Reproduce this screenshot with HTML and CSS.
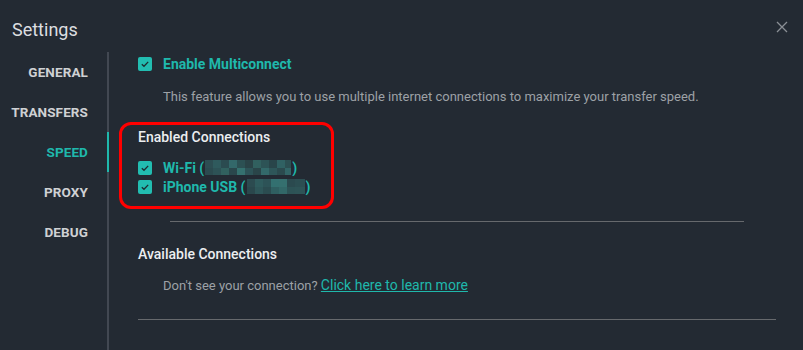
FILE: index.html
```html
<!DOCTYPE html>
<html>
<head>
<meta charset="utf-8">
<link rel="stylesheet" href="styles.css">
</head>
<body>
<div class="dialog">
  <header class="head">
    <h1 class="title">Settings</h1>
    <button class="close" aria-label="Close">
      <svg width="12" height="12" viewBox="0 0 12 12"><path d="M1 1L11 11M11 1L1 11" stroke="#8a8f95" stroke-width="1.3" fill="none"/></svg>
    </button>
  </header>
  <div class="body">
    <nav class="nav">
      <a class="nav-item">GENERAL</a>
      <a class="nav-item">TRANSFERS</a>
      <a class="nav-item active">SPEED</a>
      <a class="nav-item">PROXY</a>
      <a class="nav-item">DEBUG</a>
    </nav>
    <main class="content">
      <label class="check-row main-check">
        <span class="box"><svg width="14" height="14" viewBox="0 0 14 14"><path d="M3.8 7.2L6 9.3L10.2 4.9" stroke="#1d2b30" stroke-width="1.3" fill="none"/></svg></span>
        <span class="check-label">Enable Multiconnect</span>
      </label>
      <p class="desc">This feature allows you to use multiple internet connections to maximize your transfer speed.</p>

      <section class="enabled">
        <h2 class="section-title">Enabled Connections</h2>
        <div class="conn-list">
          <label class="check-row small">
            <span class="box"><svg width="14" height="14" viewBox="0 0 14 14"><path d="M3.8 7.2L6 9.3L10.2 4.9" stroke="#1d2b30" stroke-width="1.3" fill="none"/></svg></span>
            <span class="check-label">Wi-Fi (<span class="mosaic m-wifi"></span>)</span>
          </label>
          <label class="check-row small">
            <span class="box"><svg width="14" height="14" viewBox="0 0 14 14"><path d="M3.8 7.2L6 9.3L10.2 4.9" stroke="#1d2b30" stroke-width="1.3" fill="none"/></svg></span>
            <span class="check-label">iPhone USB (<span class="mosaic m-usb"></span>)</span>
          </label>
        </div>
        <div class="highlight"></div>
      </section>

      <hr class="sep inset">

      <h2 class="section-title avail">Available Connections</h2>
      <p class="help">Don't see your connection? <a class="link">Click here to learn more</a></p>

      <hr class="sep full">
    </main>
  </div>
</div>
</body>
</html>
```

FILE: styles.css
```css
* { box-sizing: border-box; }
html, body {
  margin: 0;
  padding: 0;
  background: #232a33;
  height: 350px;
  overflow: hidden;
}
body {
  font-family: Roboto, "Liberation Sans", sans-serif;
  color: #d9dbde;
}
.dialog {
  width: 803px;
  height: 350px;
  display: flex;
  flex-direction: column;
}
.head {
  height: 52px;
  display: flex;
  align-items: flex-start;
  justify-content: space-between;
  padding: 0 15px 0 12px;
}
.title {
  margin: 18px 0 0 0;
  font-size: 18px;
  font-weight: 400;
  line-height: 24px;
  color: #dcdee0;
}
.close {
  margin-top: 21px;
  width: 12px;
  height: 12px;
  padding: 0;
  border: 0;
  background: none;
  display: flex;
}
.body {
  flex: 1;
  display: flex;
}
.nav {
  width: 109px;
  display: flex;
  flex-direction: column;
  border-right: 2px solid #424852;
}
.nav-item {
  height: 40px;
  display: flex;
  align-items: center;
  justify-content: flex-end;
  padding-right: 19px;
  margin-right: -2px;
  border-right: 2px solid transparent;
  font-size: 13.5px;
  font-weight: 700;
  color: #cfd1d4;
  letter-spacing: 0.1px;
}
.nav-item.active {
  color: #1fb8ac;
  border-right-color: #1fb8ac;
}
.content {
  flex: 1;
  padding: 0 27px 0 29px;
}
.check-row {
  display: flex;
  align-items: center;
  height: 24px;
}
.box {
  width: 14px;
  height: 14px;
  background: #22bdb1;
  border-radius: 2px;
  display: flex;
  flex-shrink: 0;
}
.check-label {
  margin-left: 11px;
  font-size: 14px;
  font-weight: 700;
  color: #1fb8ac;
  display: flex;
  align-items: center;
}
.desc {
  margin: 12px 0 0 25px;
  font-size: 13px;
  line-height: 18px;
  color: #9da1a6;
}
.enabled {
  position: relative;
  margin-top: 22px;
}
.section-title {
  margin: 0;
  font-size: 14px;
  font-weight: 500;
  line-height: 18px;
  color: #eceef0;
}
.conn-list {
  margin-top: 12px;
}
.check-row.small {
  height: 19px;
}
.mosaic {
  display: inline-block;
  height: 15px;
  margin: 0 1px;
}
.m-wifi {
  width: 86px;
  background:
    linear-gradient(90deg, #2d4d52 0 8px, #2f5a5d 8px 16px, #2b4b50 16px 24px, #33686a 24px 32px, #2c5053 32px 40px, #2a4347 40px 48px, #31605f 48px 56px, #2d5356 56px 64px, #29454a 64px 72px, #306163 72px 80px, #2c4f52 80px 86px) top / 100% 8px no-repeat,
    linear-gradient(90deg, #2b4a4f 0 8px, #2d5256 8px 16px, #31615f 16px 24px, #2a474c 24px 32px, #35716f 32px 40px, #2d5357 40px 48px, #2a4549 48px 56px, #33696a 56px 64px, #2e5659 64px 72px, #2b4a4e 72px 80px, #326567 80px 86px) bottom / 100% 7px no-repeat;
}
.m-usb {
  width: 58px;
  background:
    linear-gradient(90deg, #2c4b50 0 8px, #2f5b5d 8px 16px, #2d5357 16px 24px, #337070 24px 32px, #35706f 32px 40px, #2b4a4f 40px 48px, #2c4e52 48px 58px) top / 100% 8px no-repeat,
    linear-gradient(90deg, #2a474c 0 8px, #2e5659 8px 16px, #2b4c50 16px 24px, #2f5f61 24px 32px, #326868 32px 40px, #2d5356 40px 48px, #2e5457 48px 58px) bottom / 100% 7px no-repeat;
}
.highlight {
  position: absolute;
  left: -19px;
  top: -6px;
  width: 215px;
  height: 87px;
  border: 3px solid #ff0000;
  border-radius: 12px;
  pointer-events: none;
}
.sep {
  border: 0;
  height: 1px;
  background: #66696d;
  margin: 0;
}
.sep.inset {
  margin: 25px 32px 0 32px;
}
.avail {
  margin-top: 23px;
}
.help {
  margin: 13px 0 0 25px;
  font-size: 13px;
  line-height: 18px;
  color: #9da1a6;
}
.link {
  color: #1fb8ac;
  text-decoration: underline;
  font-size: 14px;
}
.sep.full {
  margin-top: 24px;
}
```
